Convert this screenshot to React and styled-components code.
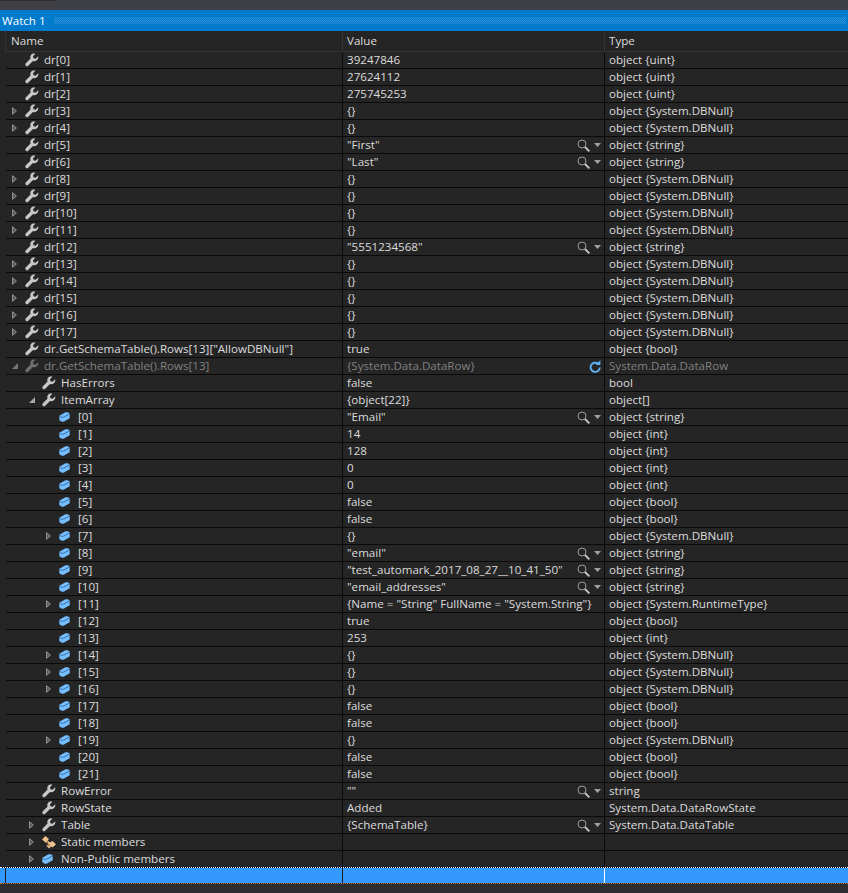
import React from "react";
import styled, { createGlobalStyle } from "styled-components";

const GlobalStyle = createGlobalStyle`
  html, body {
    margin: 0;
    padding: 0;
    background: #2d2d30;
  }
  body {
    font-family: "Open Sans", "Noto Sans", sans-serif;
    overflow: hidden;
  }
`;

const Window = styled.div`
  width: 848px;
  height: 893px;
  display: flex;
  flex-direction: column;
  background: #2d2d30;
  color: #dcdcdc;
  font-size: 11.6px;
  overflow: hidden;
`;

const TopStrip = styled.div`
  height: 10px;
  flex: none;
  background: linear-gradient(#2d2d30, #2d2d30) no-repeat 0 0 / 56px 1px, #3f3f46;
`;

const TitleBar = styled.div`
  height: 21px;
  flex: none;
  display: flex;
  align-items: center;
  gap: 8px;
  padding-left: 2px;
  background: #007acc;
  color: #fff;
  font-size: 11.6px;
`;

const Grip = styled.div`
  flex: 1;
  height: 7px;
  margin-right: 2px;
  background-image: conic-gradient(#2f92d6 25%, transparent 0 50%, #2f92d6 0 75%, transparent 0);
  background-size: 2px 2px;
`;

const Grid = styled.div`
  flex: none;
  padding-left: 6px;
  background: #252526;
`;

const Row = styled.div`
  display: grid;
  grid-template-columns: 337px 262px 1fr;
  height: 17px;
  box-sizing: border-box;
  border-bottom: 1px solid #0a0a0a;
  line-height: 16px;
  color: ${(p) => (p.$dim ? "#808080" : "#dcdcdc")};
`;

const HeaderRow = styled(Row)`
  height: 21px;
  line-height: 20px;
  border-bottom: 1px solid #333337;
  box-shadow: -1px 0 #333337;
`;

const SelectedRow = styled.div`
  display: grid;
  grid-template-columns: 6px 337px 262px 1fr;
  height: 17px;
  margin-top: -1px;
  box-sizing: border-box;
  background: linear-gradient(#000 1px, #3399ff 1px, #3399ff calc(100% - 1px), #2d2d30 0);
  background-origin: border-box;
  border-top: 1px dotted #fff;
  border-bottom: 1px dotted #c87a32;
`;

const Cell = styled.div`
  display: flex;
  align-items: center;
  min-width: 0;
  white-space: nowrap;
  box-sizing: border-box;
  height: 100%;
  border-right: 1px solid ${(p) => (p.$light ? "#333337" : "#0a0a0a")};
  padding-left: ${(p) => p.$pad ?? 4}px;
`;

const TypeCell = styled(Cell)`
  border-right: none;
`;

const SelectedCell = styled.div`
  border-right: 1px solid ${(p) => p.$line};
`;

const Arrow = styled.span`
  flex: none;
  width: 17px;
  display: flex;
  justify-content: center;
`;

const IconSlot = styled.span`
  flex: none;
  width: 14px;
  height: 14px;
  margin: 0 5px 0 2px;
  display: flex;
  align-items: center;
  justify-content: flex-start;
`;

const ValueText = styled.span`
  flex: 1;
  overflow: hidden;
`;

const Tools = styled.span`
  flex: none;
  display: flex;
  align-items: center;
  gap: 4px;
  margin-right: 3px;
`;

const Collapsed = () => (
  <svg width="5" height="8" viewBox="0 0 5 8">
    <path d="M.5.7 4.4 4 .5 7.3Z" fill="#5a5a5a" stroke="#9a9a9a" strokeWidth=".9" />
  </svg>
);

const Expanded = ({ dim }) => (
  <svg width="6" height="6" viewBox="0 0 6 6">
    <path d="M6 0V6H0Z" fill={dim ? "#777" : "#a8a8a8"} />
  </svg>
);

const Wrench = ({ dim }) => (
  <svg width="14" height="14" viewBox="0 0 14 14">
    <path
      d="M13.2 3.3 10.6 5.7 8.5 5.2 8 3.2 10.4.8C8.6.2 6.9.7 6 1.9 5.2 3 5.1 4.4 5.6 5.6L.9 10.3C.2 11 .2 12 .8 12.7 1.5 13.4 2.5 13.4 3.2 12.7L8 7.9C9.3 8.4 10.7 8.2 11.8 7.3 13 6.3 13.6 4.8 13.2 3.3Z"
      fill={dim ? "#6f6f6f" : "#c8c8c8"}
    />
  </svg>
);

const Cube = () => (
  <svg width="11" height="10" viewBox="0 0 11 10">
    <path d="M.3 3.8 6 .6C7.6-.1 10.4.5 10.7 2V6.3L5 9.4C3.2 10 .6 9.4.3 7.8Z" fill="#75beff" />
    <path d="M.6 4C1.4 5.3 3.3 5.6 4.7 5.1L10.4 2" fill="none" stroke="#2a5d8a" strokeWidth=".8" />
  </svg>
);

const StaticIcon = () => (
  <svg width="14" height="13" viewBox="0 0 14 13">
    <path
      d="M0 3.4 3.4 0 7 3 5.6 4.4 8 6.6 10.4 5 14 8.2 10.6 11.6 9 10.2 7.4 12.6 4.4 10 6.4 7.6 3.6 6.6Z"
      fill="#f0c28c"
    />
    <path d="M5.2 5.2V9H8" fill="none" stroke="#5a4630" strokeWidth=".9" />
  </svg>
);

const Magnifier = () => (
  <svg width="13" height="13" viewBox="0 0 13 13">
    <circle cx="5" cy="5" r="4" fill="none" stroke="#9a9a9a" strokeWidth="1" />
    <path d="M8 8 12.4 12.4" stroke="#c8c8c8" strokeWidth="1.8" />
  </svg>
);

const DropArrow = () => (
  <svg width="7" height="4" viewBox="0 0 7 4">
    <path d="M0 0H7L3.5 4Z" fill="#a0a0a0" />
  </svg>
);

const Refresh = () => (
  <svg width="12" height="13" viewBox="0 0 12 13">
    <path d="M9.2 3.8A4.6 4.6 0 1 0 10.8 7.4" fill="none" stroke="#5fb2f2" strokeWidth="1.9" />
    <path d="M6.6 5H11.4V.2Z" fill="#5fb2f2" />
  </svg>
);

const icons = {
  wrench: <Wrench />,
  dim: <Wrench dim />,
  cube: <Cube />,
  stat: <StaticIcon />,
};

const db = "object {System.DBNull}";
const str = "object {string}";
const ob = "object {bool}";
const oi = "object {int}";

// level, arrow (c collapsed, e expanded), icon, name, value, type, search
const rows = [
  [0, "", "wrench", "dr[0]", "39247846", "object {uint}"],
  [0, "", "wrench", "dr[1]", "27624112", "object {uint}"],
  [0, "", "wrench", "dr[2]", "275745253", "object {uint}"],
  [0, "c", "wrench", "dr[3]", "{}", db],
  [0, "c", "wrench", "dr[4]", "{}", db],
  [0, "", "wrench", "dr[5]", "\"First\"", str, true],
  [0, "", "wrench", "dr[6]", "\"Last\"", str, true],
  [0, "c", "wrench", "dr[8]", "{}", db],
  [0, "c", "wrench", "dr[9]", "{}", db],
  [0, "c", "wrench", "dr[10]", "{}", db],
  [0, "c", "wrench", "dr[11]", "{}", db],
  [0, "", "wrench", "dr[12]", "\"5551234568\"", str, true],
  [0, "c", "wrench", "dr[13]", "{}", db],
  [0, "c", "wrench", "dr[14]", "{}", db],
  [0, "c", "wrench", "dr[15]", "{}", db],
  [0, "c", "wrench", "dr[16]", "{}", db],
  [0, "c", "wrench", "dr[17]", "{}", db],
  [0, "", "wrench", "dr.GetSchemaTable().Rows[13][\"AllowDBNull\"]", "true", ob],
  [0, "e", "dim", "dr.GetSchemaTable().Rows[13]", "{System.Data.DataRow}", "System.Data.DataRow"],
  [1, "", "wrench", "HasErrors", "false", "bool"],
  [1, "e", "wrench", "ItemArray", "{object[22]}", "object[]"],
  [2, "", "cube", "[0]", "\"Email\"", str, true],
  [2, "", "cube", "[1]", "14", oi],
  [2, "", "cube", "[2]", "128", oi],
  [2, "", "cube", "[3]", "0", oi],
  [2, "", "cube", "[4]", "0", oi],
  [2, "", "cube", "[5]", "false", ob],
  [2, "", "cube", "[6]", "false", ob],
  [2, "c", "cube", "[7]", "{}", db],
  [2, "", "cube", "[8]", "\"email\"", str, true],
  [2, "", "cube", "[9]", "\"test_automark_2017_08_27__10_41_50\"", str, true],
  [2, "", "cube", "[10]", "\"email_addresses\"", str, true],
  [2, "c", "cube", "[11]", "{Name = \"String\" FullName = \"System.String\"}", "object {System.RuntimeType}"],
  [2, "", "cube", "[12]", "true", ob],
  [2, "", "cube", "[13]", "253", oi],
  [2, "c", "cube", "[14]", "{}", db],
  [2, "c", "cube", "[15]", "{}", db],
  [2, "c", "cube", "[16]", "{}", db],
  [2, "", "cube", "[17]", "false", ob],
  [2, "", "cube", "[18]", "false", ob],
  [2, "c", "cube", "[19]", "{}", db],
  [2, "", "cube", "[20]", "false", ob],
  [2, "", "cube", "[21]", "false", ob],
  [1, "", "wrench", "RowError", "\"\"", "string", true],
  [1, "", "wrench", "RowState", "Added", "System.Data.DataRowState"],
  [1, "c", "wrench", "Table", "{SchemaTable}", "System.Data.DataTable", true],
  [1, "c", "stat", "Static members", "", ""],
  [1, "c", "cube", "Non-Public members", "", ""],
];

export default function App() {
  return (
    <Window>
      <GlobalStyle />
      <TopStrip />
      <TitleBar>
        Watch 1
        <Grip />
      </TitleBar>
      <Grid>
        <HeaderRow>
          <Cell $light $pad={5}>Name</Cell>
          <Cell $light>Value</Cell>
          <TypeCell>Type</TypeCell>
        </HeaderRow>
        {rows.map(([level, arrow, icon, name, value, type, search]) => {
          const dim = icon === "dim";
          return (
            <Row key={name + level + value} $dim={dim}>
              <Cell $pad={level * 17}>
                <Arrow>
                  {arrow === "c" && <Collapsed />}
                  {arrow === "e" && <Expanded dim={dim} />}
                </Arrow>
                <IconSlot>{icons[icon]}</IconSlot>
                {name}
              </Cell>
              <Cell>
                <ValueText>{value}</ValueText>
                {search && (
                  <Tools>
                    <Magnifier />
                    <DropArrow />
                  </Tools>
                )}
                {dim && (
                  <Tools>
                    <Refresh />
                  </Tools>
                )}
              </Cell>
              <TypeCell>{type}</TypeCell>
            </Row>
          );
        })}
      </Grid>
      <SelectedRow>
        <SelectedCell $line="#1a1a1a" />
        <SelectedCell $line="#1a1a1a" />
        <SelectedCell $line="#fff" />
        <div />
      </SelectedRow>
    </Window>
  );
}
